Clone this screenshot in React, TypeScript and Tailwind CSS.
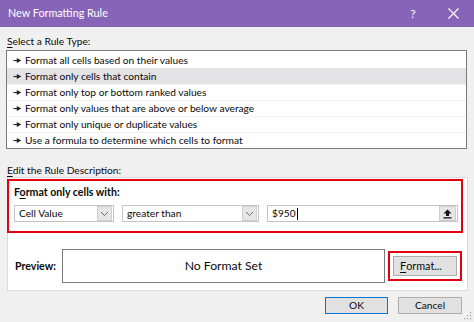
import React from "react";

const font = { fontFamily: 'Lato, "Open Sans", sans-serif' };

function Arrow() {
  return (
    <svg width="9" height="7" viewBox="0 0 9 7" className="shrink-0">
      <rect x="0.5" y="3" width="4.5" height="1.1" fill="#222" />
      <path d="M3.8 1.1 L8.3 3.55 L3.8 6 Z" fill="#222" />
    </svg>
  );
}

function Chevron() {
  return (
    <div className="w-[15px] h-[15px] mr-[1px] bg-[#e6e6e6] border border-[#cfcfcf] flex items-center justify-center">
      <svg width="9" height="6" viewBox="0 0 9 6">
        <path d="M1 1 L4.5 4.5 L8 1" stroke="#6d6d6d" strokeWidth="1" fill="none" />
      </svg>
    </div>
  );
}

const rules = [
  "Format all cells based on their values",
  "Format only cells that contain",
  "Format only top or bottom ranked values",
  "Format only values that are above or below average",
  "Format only unique or duplicate values",
  "Use a formula to determine which cells to format",
];

export default function App() {
  return (
    <div
      className="w-[474px] h-[322px] bg-[#f0f0f0] flex flex-col text-[10.2px] text-[#0a0a0a] overflow-hidden relative"
      style={font}
    >
      <div className="h-[27px] bg-[#8764b8] flex items-center text-white shrink-0">
        <span className="pl-[8px] text-[10.8px] leading-none flex-1">New Formatting Rule</span>
        <div className="w-[20px] flex justify-center text-[12px] leading-none">?</div>
        <div className="w-[20px] ml-[20px] mr-[11px] flex justify-center">
          <svg width="11" height="11" viewBox="0 0 11 11">
            <path d="M0.5 0.5 L10.5 10.5 M10.5 0.5 L0.5 10.5" stroke="#fff" strokeWidth="1.2" />
          </svg>
        </div>
      </div>

      <div className="px-[6px] pt-[7px] flex flex-col">
        <div className="h-[14px] leading-[14px] pl-[1px]">
          <span className="underline underline-offset-2">S</span>elect a Rule Type:
        </div>
        <div className="mt-[2px] mr-[1px] h-[99px] bg-white border border-[#7a7a7a] pt-[1px] flex flex-col">
          {rules.map((r, i) => (
            <div
              key={r}
              className={
                "h-[16px] flex items-center gap-[3px] pl-[6px] " +
                (i === 1 ? "bg-[#e3e3e6]" : i > 1 ? "border-t border-[#f0f0f0]" : "")
              }
            >
              <Arrow />
              <span className="leading-none">{r}</span>
            </div>
          ))}
        </div>

        <div className="h-[14px] leading-[14px] pl-[1px] mt-[14px]">
          <span className="underline underline-offset-2">E</span>dit the Rule Description:
        </div>
        <div className="ml-[1px] h-[114px] bg-white border border-[#d9d9d9] flex flex-col">
          <div className="mt-[1px] -ml-[1px] mr-[4px] h-[54px] border-2 border-[#e3000f] flex flex-col pl-[5px] pt-[4px]">
            <div className="font-bold h-[14px] leading-[14px] text-[10.6px]">
              F<span className="underline underline-offset-2">o</span>rmat only cells with:
            </div>
            <div className="mt-[6px] flex gap-[8px]">
              <div className="w-[100px] h-[17px] bg-white border border-[#c4c4c4] flex items-center">
                <span className="flex-1 pl-[4px] leading-none">Cell Value</span>
                <Chevron />
              </div>
              <div className="w-[137px] h-[17px] bg-white border border-[#c4c4c4] flex items-center">
                <span className="flex-1 pl-[4px] leading-none">greater than</span>
                <Chevron />
              </div>
              <div className="w-[191px] h-[17px] bg-white border border-[#c4c4c4] flex items-center">
                <span className="flex-1 pl-[4px] leading-none flex items-center">
                  $950<span className="w-[1px] h-[12px] bg-black ml-[1px]" />
                </span>
                <div className="w-[17px] h-[15px] mr-[1px] bg-[#e6e6e6] border border-[#cfcfcf] flex items-center justify-center">
                  <svg width="9" height="10" viewBox="0 0 9 10">
                    <path d="M4.5 0.5 L8.5 4.5 L6 4.5 L6 7 L3 7 L3 4.5 L0.5 4.5 Z" fill="#111" />
                    <rect x="0.5" y="8.2" width="8" height="1.3" fill="#111" />
                  </svg>
                </div>
              </div>
            </div>
          </div>

          <div className="mt-[16px] flex items-center">
            <div className="w-[54px] pl-[7px] font-bold leading-none text-[10.6px]">Preview:</div>
            <div className="w-[323px] h-[34px] border border-[#7a7a7a] flex items-center justify-center text-[12.2px]">
              No Format Set
            </div>
            <div className="ml-[3px] w-[74px] h-[30px] border-2 border-[#e3000f] flex items-center justify-center">
              <div className="w-[64px] h-[20px] bg-[#e1e1e1] border border-[#adadad] flex items-center justify-center leading-none text-[10.8px] pr-[8px]">
                <span className="underline underline-offset-2">F</span>ormat...
              </div>
            </div>
          </div>
        </div>

        <div className="mt-[6px] flex justify-end gap-[10px] pr-[6px]">
          <div className="w-[63px] h-[17px] bg-[#e1e1e1] border border-[#0078d7] flex items-center justify-center leading-none">
            OK
          </div>
          <div className="w-[64px] h-[17px] bg-[#e1e1e1] border border-[#adadad] flex items-center justify-center leading-none">
            Cancel
          </div>
        </div>
      </div>

      <svg width="8" height="8" viewBox="0 0 8 8" className="absolute right-[2px] bottom-[2px]">
        <rect x="6" y="0" width="1.2" height="1.2" fill="#a0a0a0" />
        <rect x="3" y="3" width="1.2" height="1.2" fill="#a0a0a0" />
        <rect x="6" y="3" width="1.2" height="1.2" fill="#a0a0a0" />
        <rect x="0" y="6" width="1.2" height="1.2" fill="#a0a0a0" />
        <rect x="3" y="6" width="1.2" height="1.2" fill="#a0a0a0" />
        <rect x="6" y="6" width="1.2" height="1.2" fill="#a0a0a0" />
      </svg>
    </div>
  );
}
